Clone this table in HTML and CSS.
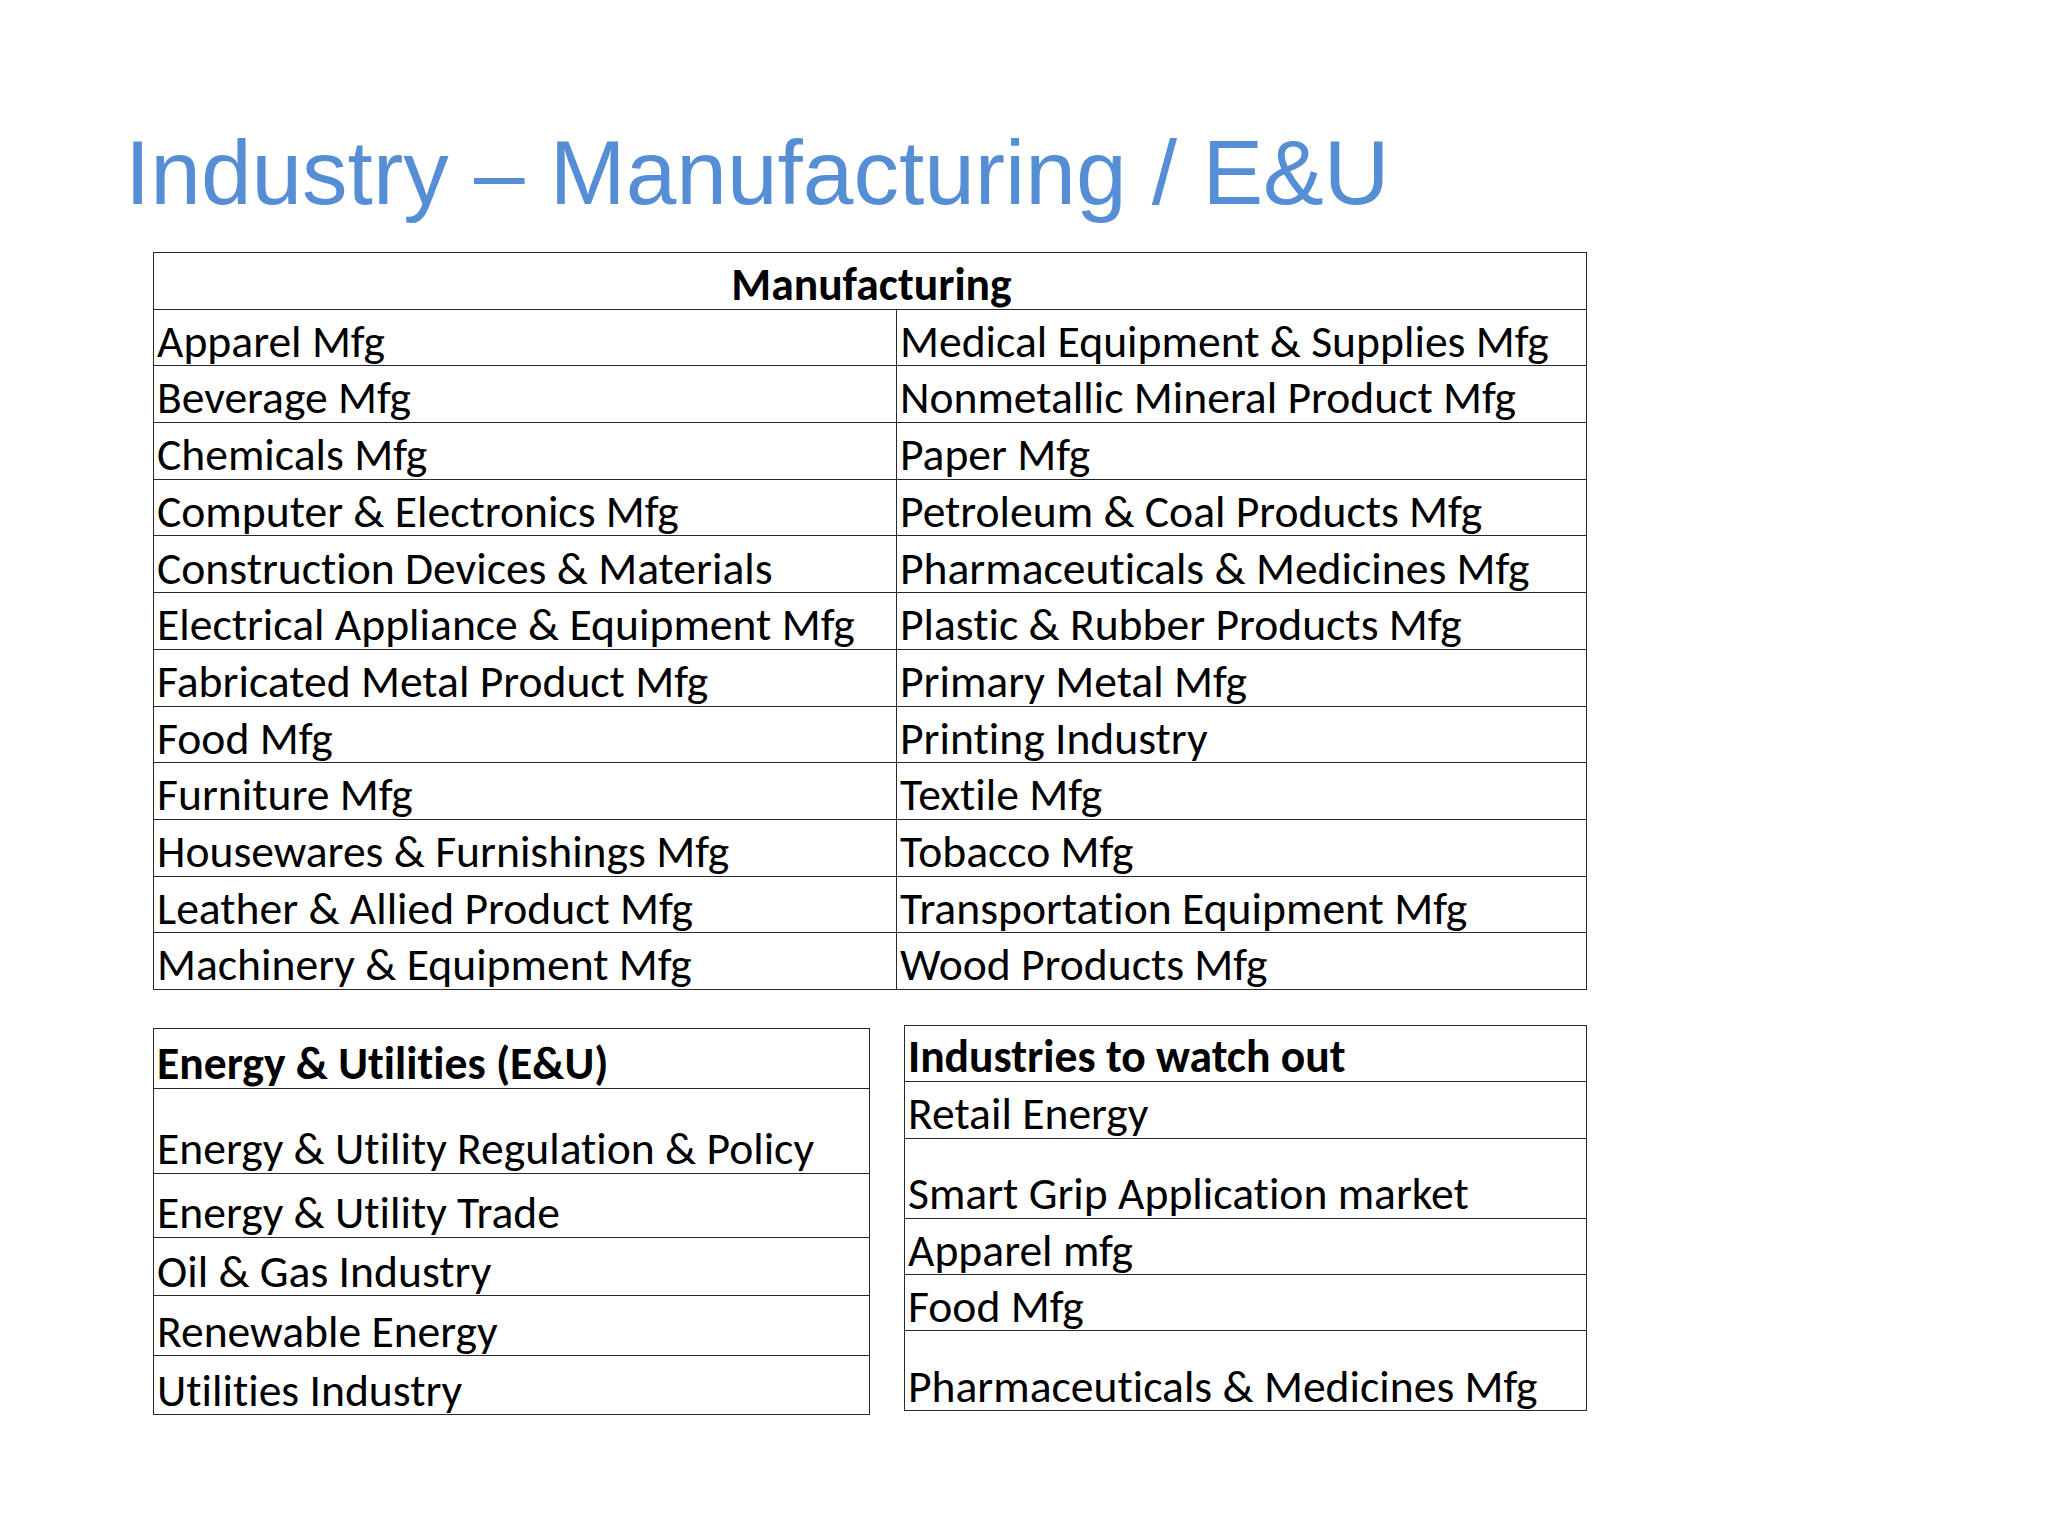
FILE: index.html
```html
<!DOCTYPE html>
<html lang="en">
<head>
<meta charset="utf-8">
<title>Industry – Manufacturing / E&amp;U</title>
<link rel="stylesheet" href="styles.css">
</head>
<body>
<div class="slide">
  <h1 class="title">Industry – Manufacturing / E&amp;U</h1>

  <table class="grid mfg">
    <colgroup><col class="mfg-left"><col></colgroup>
    <tr class="r57"><th colspan="2" class="center">Manufacturing</th></tr>
    <tr class="r57"><td>Apparel Mfg</td><td>Medical Equipment &amp; Supplies Mfg</td></tr>
    <tr class="r57"><td>Beverage Mfg</td><td>Nonmetallic Mineral Product Mfg</td></tr>
    <tr class="r57"><td>Chemicals Mfg</td><td>Paper Mfg</td></tr>
    <tr class="r57"><td>Computer &amp; Electronics Mfg</td><td>Petroleum &amp; Coal Products Mfg</td></tr>
    <tr class="r57"><td>Construction Devices &amp; Materials</td><td>Pharmaceuticals &amp; Medicines Mfg</td></tr>
    <tr class="r57"><td>Electrical Appliance &amp; Equipment Mfg</td><td>Plastic &amp; Rubber Products Mfg</td></tr>
    <tr class="r57"><td>Fabricated Metal Product Mfg</td><td>Primary Metal Mfg</td></tr>
    <tr class="r57"><td>Food Mfg</td><td>Printing Industry</td></tr>
    <tr class="r57"><td>Furniture Mfg</td><td>Textile Mfg</td></tr>
    <tr class="r57"><td>Housewares &amp; Furnishings Mfg</td><td>Tobacco Mfg</td></tr>
    <tr class="r57"><td>Leather &amp; Allied Product Mfg</td><td>Transportation Equipment Mfg</td></tr>
    <tr class="r57"><td>Machinery &amp; Equipment Mfg</td><td>Wood Products Mfg</td></tr>
  </table>

  <div class="lower">
    <table class="grid eu">
      <tr class="r60"><th>Energy &amp; Utilities (E&amp;U)</th></tr>
      <tr class="r85"><td>Energy &amp; Utility Regulation &amp; Policy</td></tr>
      <tr class="r64"><td>Energy &amp; Utility Trade</td></tr>
      <tr class="r58"><td>Oil &amp; Gas Industry</td></tr>
      <tr class="r60"><td>Renewable Energy</td></tr>
      <tr class="r59"><td>Utilities Industry</td></tr>
    </table>

    <table class="grid watch">
      <tr class="r56"><th>Industries to watch out</th></tr>
      <tr class="r57"><td>Retail Energy</td></tr>
      <tr class="r80"><td>Smart Grip Application market</td></tr>
      <tr class="r57"><td>Apparel mfg</td></tr>
      <tr class="r56"><td>Food Mfg</td></tr>
      <tr class="r80"><td>Pharmaceuticals &amp; Medicines Mfg</td></tr>
    </table>
  </div>
</div>
</body>
</html>
```

FILE: styles.css
```css
html, body {
  margin: 0;
  padding: 0;
  background: #ffffff;
}

.slide {
  width: 2048px;
  height: 1536px;
  box-sizing: border-box;
  padding: 127px 0 0 153px;
  font-family: "Carlito", "Calibri", "Lato", sans-serif;
  font-variant-ligatures: none;
  color: #000000;
}

.title {
  margin: 0 0 0 -28px;
  font-family: "Liberation Sans", Arial, sans-serif;
  font-weight: normal;
  font-size: 91px;
  line-height: 91px;
  color: #558ed5;
  white-space: nowrap;
}

.grid {
  border-collapse: collapse;
  table-layout: fixed;
  font-size: 45.6px;
  line-height: 1;
}

.grid th,
.grid td {
  border: 1.5px solid #2a2a2a;
  padding: 0 0 1px 3px;
  vertical-align: bottom;
  text-align: left;
  white-space: nowrap;
}

.grid th {
  font-weight: bold;
}

.grid th.center {
  text-align: center;
}

.mfg {
  margin-top: 34px;
  width: 1434px;
}

.mfg-left {
  width: 743px;
}

.lower {
  display: flex;
  align-items: flex-start;
  gap: 34px;
  margin-top: 35px;
}

.eu {
  width: 717px;
  margin-top: 3px;
}

.watch {
  width: 683px;
}

.r56 { height: 56px; }
.r57 { height: 56.7px; }
.r58 { height: 58.5px; }
.r59 { height: 59px; }
.r60 { height: 60px; }
.r64 { height: 64px; }
.r80 { height: 80px; }
.r85 { height: 85px; }
```
